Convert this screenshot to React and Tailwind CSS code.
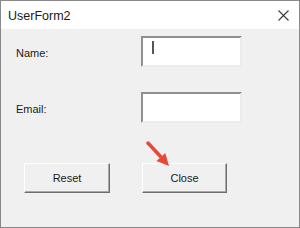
import React from 'react';

const TextBox = ({ caret }) => (
  <div className="w-[101px] h-[31px] bg-white border-2 border-t-[#8f8f8f] border-l-[#8f8f8f] border-r-[#ececec] border-b-[#ececec] pl-[9px] pt-[3px]">
    {caret && <div className="w-[2px] h-[13px] bg-[#555]"></div>}
  </div>
);

const FormButton = ({ label }) => (
  <button className="h-[30px] bg-[#f0f0f0] border border-t-white border-l-white border-r-[#6d6d6d] border-b-[#6d6d6d] shadow-[inset_-1px_-1px_0_#a8a8a8] text-[11px] text-[#1a1a1a] flex items-center justify-center">
    {label}
  </button>
);

const App = () => {
  return (
    <div className="relative w-[300px] h-[228px] border border-[#8a8a8a] bg-[#f0f0f0] flex flex-col font-['Liberation_Sans',sans-serif]">
      <div className="h-[28px] bg-white flex items-center justify-between pl-[7px] pr-[10px]">
        <span className="text-[12.5px] text-[#1a1a1a] mt-[2px]">UserForm2</span>
        <svg width="11" height="11" viewBox="0 0 11 11" className="mt-[1px]">
          <path d="M0.5 0.5 L10.5 10.5 M10.5 0.5 L0.5 10.5" stroke="#3a3a3a" strokeWidth="1.1" />
        </svg>
      </div>

      <div className="flex-1 pt-[7px]">
        <div className="flex items-center">
          <div className="w-[140px] pl-[15px] pt-[3px] text-[11px] text-[#1a1a1a]">Name:</div>
          <TextBox caret />
        </div>
        <div className="flex items-center mt-[25px]">
          <div className="w-[140px] pl-[15px] pt-[3px] text-[11px] text-[#1a1a1a]">Email:</div>
          <TextBox />
        </div>
        <div className="flex mt-[40px] pl-[23px] gap-[32px]">
          <div className="w-[86px] flex flex-col"><FormButton label="Reset" /></div>
          <div className="w-[85px] flex flex-col"><FormButton label="Close" /></div>
        </div>
      </div>

      <svg className="absolute left-[140px] top-[138px]" width="32" height="32" viewBox="0 0 32 32">
        <path d="M7 4 L20 18" stroke="#e8483b" strokeWidth="3.5" strokeLinecap="round" />
        <polygon points="28,27 15.5,22.1 24.3,14.1" fill="#e8483b" />
      </svg>
    </div>
  );
};

export default App;
